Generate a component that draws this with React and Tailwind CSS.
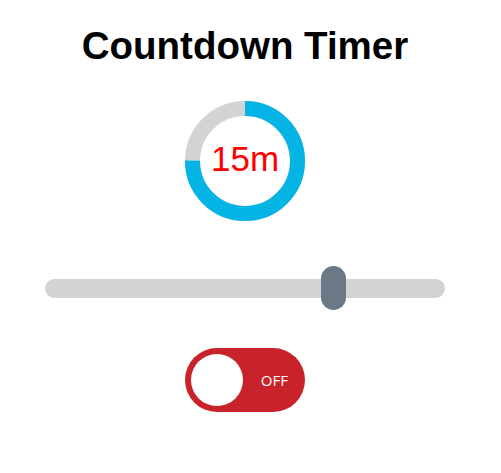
import React, { useState } from "react";

const TOTAL = 20;

function Ring({ minutes }) {
  const r = 52.5;
  const c = 2 * Math.PI * r;
  const frac = minutes / TOTAL;
  return (
    <div className="relative w-[120px] h-[120px]">
      <svg width="120" height="120" viewBox="0 0 120 120" className="absolute inset-0">
        <circle cx="60" cy="60" r={r} fill="none" stroke="#d3d3d3" strokeWidth="15" />
        <circle
          cx="60"
          cy="60"
          r={r}
          fill="none"
          stroke="#03b4e4"
          strokeWidth="15"
          strokeDasharray={`${c * frac} ${c}`}
          transform="rotate(-90 60 60)"
        />
      </svg>
      <div className="absolute inset-0 flex items-center justify-center pb-[5px]">
        <span className="text-[#ff0000] text-[35px] leading-none font-['Liberation_Sans',Arial,sans-serif]">
          {minutes}m
        </span>
      </div>
    </div>
  );
}

export default function App() {
  const [minutes] = useState(15);
  const [on, setOn] = useState(false);
  return (
    <div className="w-[490px] bg-white flex flex-col items-center font-['Liberation_Sans',Arial,sans-serif]">
      <h1 className="pt-[24px] text-[38.5px] leading-[44px] font-bold text-black">Countdown Timer</h1>

      <div className="mt-[33px]">
        <Ring minutes={minutes} />
      </div>

      <div className="mt-[45px] relative w-[400px] h-[44px] flex items-center">
        <div className="w-full h-[19px] rounded-full bg-[#d3d3d3]" />
        <div className="absolute left-[276px] top-0 w-[25px] h-[44px] rounded-full bg-[#6b7886]" />
      </div>

      <button
        onClick={() => setOn(!on)}
        className="mt-[38px] w-[120px] h-[64px] rounded-full bg-[#c8232a] flex items-center pl-[6px] pr-[17px]"
      >
        <span className="w-[52px] h-[52px] rounded-full bg-white" />
        <span className="ml-auto text-white text-[15px] font-['Open_Sans',sans-serif]">OFF</span>
      </button>
    </div>
  );
}
